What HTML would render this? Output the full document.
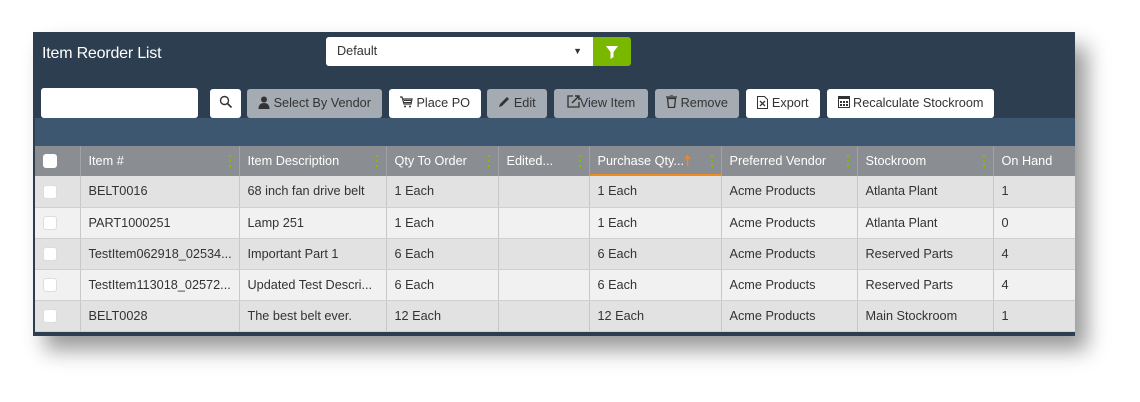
<!DOCTYPE html><html><head><style>
body{margin:0;width:1140px;height:402px;background:#fff;font-family:"Liberation Sans",sans-serif;position:relative;overflow:hidden}
.p{position:absolute;left:33px;top:32px;width:1042px;height:304px;background:#2c3e50;box-shadow:12px 14px 20px rgba(0,0,0,.4);overflow:hidden;border-left:2px solid #2c3e50;box-sizing:border-box}
.a{position:absolute}
.t{left:7px;top:13px;color:#fff;font-size:16px;letter-spacing:-.2px}
.btn{position:absolute;top:57px;height:29px;border-radius:3px;font-size:12.7px;line-height:29px;text-align:center;color:#333;background:#fff;box-sizing:border-box;white-space:nowrap}
.g{background:#a4abb3;color:#333}
.band{left:0;top:86px;width:1042px;height:28px;background:#3e5770}
table{position:absolute;left:0;top:114px;width:1040px;border-collapse:collapse;font-size:12.7px;table-layout:fixed}
th{background:#8a8d91;color:#fff;font-weight:normal;text-align:left;height:30px;padding:0 8px;border-right:1px solid #a0a3a6;position:relative;box-sizing:border-box;white-space:nowrap;overflow:hidden}
td{height:31px;padding:0 8px;color:#333;border-right:1px solid #c8c8c8;border-bottom:1px solid #cfcfcf;box-sizing:border-box;white-space:nowrap;overflow:hidden}
tbody tr:nth-child(odd) td{background:#e2e2e2}
tbody tr:nth-child(even) td{background:#f1f1f1}
.cb{display:inline-block;width:14px;height:14px;background:#fff;border-radius:3px;border:1px solid #ddd;vertical-align:middle;box-sizing:border-box}
.d{position:absolute;right:8px;top:9px;width:2px;height:12px;background:repeating-linear-gradient(#7cc000 0 2px,transparent 2px 5px)}
</style></head><body>
<div class="p">
<div class="a t">Item Reorder List</div>
<div class="a" style="left:291px;top:5px;width:268px;height:29px;background:#fff;border-radius:3px 0 0 3px;font-size:12.7px;line-height:28px;padding-left:11px;box-sizing:border-box;color:#333">Default<span style="position:absolute;right:12px;font-size:9px">▼</span></div>
<div class="a" style="left:558px;top:5px;width:38px;height:29px;background:#7ab800;border-radius:0 3px 3px 0"><svg width="38" height="29"><path d="M13 9h12l-4.5 6v5l-3 2v-7z" fill="#fff"/></svg></div>
<div class="btn" style="left:6px;width:157px;top:56px;height:30px"></div>
<div class="btn" style="left:175px;width:31px"><svg width="14" height="14" style="vertical-align:-2px"><circle cx="5.5" cy="5.5" r="4" fill="none" stroke="#333" stroke-width="1.4"/><path d="M8.5 8.5l4 4" stroke="#333" stroke-width="1.6"/></svg></div>
<div class="btn g" style="left:212px;width:135px"><svg width="12" height="13" style="vertical-align:-2px"><circle cx="6" cy="3.5" r="3" fill="#333"/><path d="M0.5 13c0-4 2-6 5.5-6s5.5 2 5.5 6z" fill="#333"/></svg> Select By Vendor</div>
<div class="btn" style="left:354px;width:92px"><svg width="13" height="12" style="vertical-align:-1px"><path d="M0 1h2l2 7h7l1-5H3" fill="none" stroke="#333" stroke-width="1.2"/><path d="M4 4.5h7M4 6.5h7" stroke="#333"/><circle cx="5" cy="10.5" r="1" fill="#333"/><circle cx="10" cy="10.5" r="1" fill="#333"/></svg> Place PO</div>
<div class="btn g" style="left:452px;width:60px"><svg width="12" height="12" style="vertical-align:-1px"><path d="M1 11l1-3 7-7 2 2-7 7z" fill="#333"/></svg> Edit</div>
<div class="btn g" style="left:519px;width:94px"><svg width="13" height="13" style="vertical-align:-1px"><path d="M6 1H1v11h11V7" fill="none" stroke="#333" stroke-width="1.3"/><path d="M5 8l7-7M8 1h4v4" fill="none" stroke="#333" stroke-width="1.5"/></svg>View Item</div>
<div class="btn g" style="left:620px;width:84px"><svg width="11" height="13" style="vertical-align:-1px"><path d="M0 2h11M4 0h3M1.5 3.5h8l-1 9h-6z" fill="none" stroke="#333" stroke-width="1.3"/></svg> Remove</div>
<div class="btn" style="left:711px;width:74px"><svg width="11" height="13" style="vertical-align:-2px"><path d="M0.5 0.5h7l3 3v9h-10z" fill="none" stroke="#333"/><path d="M3 5l5 5M8 5l-5 5" stroke="#333" stroke-width="1.3"/></svg> Export</div>
<div class="btn" style="left:792px;width:167px"><svg width="12" height="12" style="vertical-align:-1px"><rect x="0.5" y="0.5" width="11" height="11" fill="none" stroke="#333"/><rect x="0" y="0" width="12" height="3" fill="#333"/><path d="M2 5h2v2H2zM5 5h2v2H5zM8 5h2v2H8zM2 8h2v2H2zM5 8h2v2H5zM8 8h2v2H8z" fill="#333"/></svg> Recalculate Stockroom</div>
<div class="a band"></div>
<table>
<colgroup><col style="width:45px"><col style="width:159px"><col style="width:147px"><col style="width:112px"><col style="width:91px"><col style="width:132px"><col style="width:136px"><col style="width:136px"><col style="width:82px"></colgroup>
<thead><tr><th><span class="cb" style="border:0"></span></th><th>Item #<i class="d"></i></th><th>Item Description<i class="d"></i></th><th>Qty To Order<i class="d"></i></th><th>Edited...<i class="d"></i></th><th style="box-shadow:inset 0 -2px #f08a1c">Purchase Qty...<svg width="7" height="11" style="vertical-align:-1px"><path d="M3.5 1v10M1 4l2.5-3 2.5 3" fill="none" stroke="#f08a1c" stroke-width="1.5"/></svg><i class="d"></i></th><th>Preferred Vendor<i class="d"></i></th><th>Stockroom<i class="d"></i></th><th>On Hand</th></tr></thead>
<tbody>
<tr><td><span class="cb"></span></td><td>BELT0016</td><td>68 inch fan drive belt</td><td>1 Each</td><td></td><td>1 Each</td><td>Acme Products</td><td>Atlanta Plant</td><td>1</td></tr>
<tr><td><span class="cb"></span></td><td>PART1000251</td><td>Lamp 251</td><td>1 Each</td><td></td><td>1 Each</td><td>Acme Products</td><td>Atlanta Plant</td><td>0</td></tr>
<tr><td><span class="cb"></span></td><td>TestItem062918_02534...</td><td>Important Part 1</td><td>6 Each</td><td></td><td>6 Each</td><td>Acme Products</td><td>Reserved Parts</td><td>4</td></tr>
<tr><td><span class="cb"></span></td><td>TestItem113018_02572...</td><td>Updated Test Descri...</td><td>6 Each</td><td></td><td>6 Each</td><td>Acme Products</td><td>Reserved Parts</td><td>4</td></tr>
<tr><td><span class="cb"></span></td><td>BELT0028</td><td>The best belt ever.</td><td>12 Each</td><td></td><td>12 Each</td><td>Acme Products</td><td>Main Stockroom</td><td>1</td></tr>
</tbody>
</table>
</div>
</body></html>
